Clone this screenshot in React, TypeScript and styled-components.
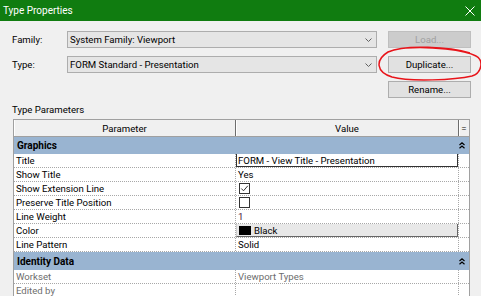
import styled, { createGlobalStyle } from 'styled-components';

const GlobalStyle = createGlobalStyle`
  html, body {
    margin: 0;
    padding: 0;
    background: #f0f0f0;
  }
  * {
    box-sizing: border-box;
  }
`;

const font = `Roboto, "Liberation Sans", Arial, sans-serif`;

const Window = styled.div`
  position: relative;
  width: 481px;
  height: 296px;
  overflow: hidden;
  background: #f0f0f0;
  font-family: ${font};
  font-size: 9.6px;
  color: #000;
`;

const TitleBar = styled.div`
  height: 21px;
  background: #107c10;
  color: #fff;
  display: flex;
  align-items: center;
  justify-content: space-between;
  padding: 0 6px 0 3px;
  font-size: 10px;
`;

const CloseIcon = () => (
  <svg width="10" height="10" viewBox="0 0 10 10">
    <path d="M0.5 0.5 L9.5 9.5 M9.5 0.5 L0.5 9.5" stroke="#fff" strokeWidth="1" />
  </svg>
);

const TopGrid = styled.div`
  display: grid;
  grid-template-columns: 44px 310px 83px;
  grid-auto-rows: 17px;
  column-gap: 11px;
  row-gap: 8px;
  padding: 10px 0 0 12px;
`;

const Label = styled.div`
  display: flex;
  align-items: center;
`;

const Combo = styled.div`
  display: flex;
  align-items: center;
  justify-content: space-between;
  background: #e5e5e5;
  border: 1px solid #adadad;
  padding: 0 4px 0 2px;
`;

const Chevron = () => (
  <svg width="7" height="4" viewBox="0 0 7 4">
    <path d="M0.5 0.5 L3.5 3.5 L6.5 0.5" stroke="#606060" strokeWidth="1" fill="none" />
  </svg>
);

const Button = styled.div<{ disabled?: boolean }>`
  display: flex;
  align-items: center;
  justify-content: center;
  background: ${({ disabled }) => (disabled ? '#cccccc' : '#e1e1e1')};
  border: 1px solid ${({ disabled }) => (disabled ? '#bfbfbf' : '#adadad')};
  color: ${({ disabled }) => (disabled ? '#a0a0a0' : '#000')};
`;

const Caption = styled.div`
  padding: 6px 0 0 12px;
  height: 21px;
`;

const Table = styled.div`
  margin-left: 13px;
  width: 457px;
  border: 1px solid #a0a0a0;
  border-bottom: none;
  background: #fff;
`;

const HeaderRow = styled.div`
  display: grid;
  grid-template-columns: 222px 223px 1fr;
  height: 17px;
  background: #f0f0f0;
  border-bottom: 1px solid #a0a0a0;
`;

const HeaderCell = styled.div<{ last?: boolean }>`
  display: flex;
  align-items: center;
  justify-content: center;
  border-right: ${({ last }) => (last ? 'none' : '1px solid #6d6d6d')};
  box-shadow: inset 1px 0 0 #ffffff;
`;

const GroupRow = styled.div<{ tall?: boolean }>`
  display: flex;
  align-items: center;
  justify-content: space-between;
  height: ${({ tall }) => (tall ? 18 : 17)}px;
  background: #99b4d1;
  font-weight: bold;
  padding: 0 4px 0 3px;
  font-size: 10px;
`;

const GroupIcon = () => (
  <svg width="6" height="7" viewBox="0 0 6 7">
    <path d="M0.5 3 L3 0.8 L5.5 3 M0.5 6.2 L3 4 L5.5 6.2" stroke="#000" strokeWidth="1.2" fill="none" />
  </svg>
);

const Row = styled.div`
  display: grid;
  grid-template-columns: 222px 223px 1fr;
  height: 14px;
  border-bottom: 1px dotted #a8a8a8;
`;

const Cell = styled.div<{ muted?: boolean; divider?: boolean }>`
  display: flex;
  align-items: center;
  padding-left: 2px;
  color: ${({ muted }) => (muted ? '#6d6d6d' : '#000')};
  border-right: ${({ divider }) => (divider ? '1px dotted #a8a8a8' : 'none')};
  overflow: hidden;
  white-space: nowrap;
`;

const EditBox = styled.div`
  flex: 1;
  height: 14px;
  margin-left: -2px;
  margin-top: -1px;
  border: 1px solid #333;
  background: #fff;
  display: flex;
  align-items: center;
  padding-left: 1px;
`;

const ColorButton = styled.div`
  flex: 1;
  height: 14px;
  margin-left: -2px;
  margin-top: -1px;
  background: #e8e8e8;
  border: 1px solid #d0d0d0;
  border-right-color: #666;
  border-bottom-color: #666;
  display: flex;
  align-items: center;
  gap: 3px;
  padding-left: 2px;
`;

const Swatch = styled.span`
  width: 12px;
  height: 9px;
  background: #000;
`;

const Check = ({ checked }: { checked: boolean }) => (
  <svg width="11" height="11" viewBox="0 0 11 11" style={{ marginLeft: 1 }}>
    <rect x="0.5" y="0.5" width="10" height="10" fill="#fff" stroke="#333" />
    {checked && <path d="M2.3 5.5 L4.5 7.8 L8.8 2.8" stroke="#333" strokeWidth="1" fill="none" />}
  </svg>
);

const Ellipse = styled.svg`
  position: absolute;
  left: 0;
  top: 0;
  pointer-events: none;
`;

type Param = { name: string; value: React.ReactNode; muted?: boolean };

const graphics: Param[] = [
  { name: 'Title', value: <EditBox>FORM - View Title - Presentation</EditBox> },
  { name: 'Show Title', value: 'Yes' },
  { name: 'Show Extension Line', value: <Check checked /> },
  { name: 'Preserve Title Position', value: <Check checked={false} /> },
  { name: 'Line Weight', value: <span style={{ color: '#4a1038' }}>1</span> },
  {
    name: 'Color',
    value: (
      <ColorButton>
        <Swatch />
        Black
      </ColorButton>
    ),
  },
  { name: 'Line Pattern', value: 'Solid' },
];

const identity: Param[] = [
  { name: 'Workset', value: 'Viewport Types', muted: true },
  { name: 'Edited by', value: '', muted: true },
];

const ParamRows = ({ items }: { items: Param[] }) => (
  <>
    {items.map(p => (
      <Row key={p.name}>
        <Cell muted={p.muted} divider>
          {p.name}
        </Cell>
        <Cell muted={p.muted} divider>
          {p.value}
        </Cell>
        <Cell />
      </Row>
    ))}
  </>
);

const App = () => (
  <Window>
    <GlobalStyle />
    <TitleBar>
      <span>Type Properties</span>
      <CloseIcon />
    </TitleBar>
    <TopGrid>
      <Label>Family:</Label>
      <Combo>
        <span>System Family: Viewport</span>
        <Chevron />
      </Combo>
      <Button disabled>Load...</Button>
      <Label>Type:</Label>
      <Combo>
        <span>FORM Standard - Presentation</span>
        <Chevron />
      </Combo>
      <Button>Duplicate...</Button>
      <span />
      <span />
      <Button>Rename...</Button>
    </TopGrid>
    <Caption>Type Parameters</Caption>
    <Table>
      <HeaderRow>
        <HeaderCell>Parameter</HeaderCell>
        <HeaderCell>Value</HeaderCell>
        <HeaderCell last>=</HeaderCell>
      </HeaderRow>
      <GroupRow>
        Graphics
        <GroupIcon />
      </GroupRow>
      <ParamRows items={graphics} />
      <GroupRow tall>
        Identity Data
        <GroupIcon />
      </GroupRow>
      <ParamRows items={identity} />
    </Table>
    <Ellipse width="481" height="296" viewBox="0 0 481 296">
      <path
        d="M470 53 C450 47, 405 44, 388 52 C375 60, 376 72, 392 77 C410 82, 455 80, 472 76 C482 73, 484 60, 476 56 C465 50, 430 46, 406 48"
        stroke="#e8141a"
        strokeWidth="1.5"
        fill="none"
      />
    </Ellipse>
  </Window>
);

export default App;
